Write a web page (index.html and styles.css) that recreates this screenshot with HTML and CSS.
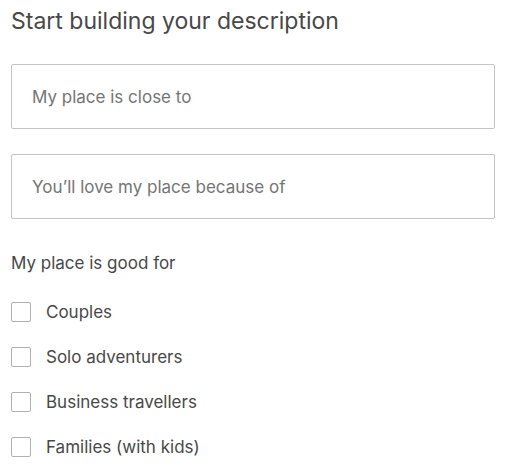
FILE: index.html
```html
<!DOCTYPE html>
<html>
<head>
<meta charset="utf-8">
<link rel="stylesheet" href="styles.css">
</head>
<body>
<div class="page">
  <h1 class="title">Start building your description</h1>
  <div class="field"><span class="placeholder">My place is close to</span></div>
  <div class="field"><span class="placeholder">You’ll love my place because of</span></div>
  <div class="label">My place is good for</div>
  <ul class="checks">
    <li class="check"><span class="box"></span><span class="check-text">Couples</span></li>
    <li class="check"><span class="box"></span><span class="check-text">Solo adventurers</span></li>
    <li class="check"><span class="box"></span><span class="check-text">Business travellers</span></li>
    <li class="check"><span class="box"></span><span class="check-text">Families (with kids)</span></li>
  </ul>
</div>
</body>
</html>
```
FILE: styles.css
```css
html, body {
  margin: 0;
  padding: 0;
  background: #fff;
}
body {
  font-family: "Inter", "Liberation Sans", sans-serif;
  color: #484848;
}
.page {
  width: 484px;
  padding: 6px 0 0 11px;
  display: flex;
  flex-direction: column;
}
.title {
  margin: 0;
  font-size: 23px;
  font-weight: 400;
  line-height: 30px;
  color: #484848;
}
.field {
  margin-top: 28px;
  border: 1px solid #c4c4c4;
  border-radius: 2px;
  display: flex;
  align-items: center;
  padding-left: 20px;
  box-sizing: border-box;
  height: 65px;
}
.field + .field {
  margin-top: 25px;
}
.placeholder {
  font-size: 17px;
  color: #757575;
}
.label {
  margin-top: 32px;
  font-size: 17px;
  line-height: 24px;
}
.checks {
  list-style: none;
  margin: 27px 0 0;
  padding: 0;
  display: flex;
  flex-direction: column;
  gap: 25px;
}
.check {
  display: flex;
  align-items: center;
  height: 20px;
}
.box {
  width: 20px;
  height: 20px;
  box-sizing: border-box;
  border: 1px solid #b0b0b0;
  border-radius: 2px;
  flex: none;
}
.check-text {
  margin-left: 15px;
  font-size: 17px;
  color: #484848;
}
```
